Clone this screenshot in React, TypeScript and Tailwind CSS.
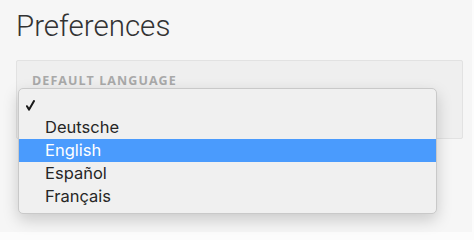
import React from "react";

const items = ["Deutsche", "English", "Español", "Français"];

export default function App() {
  return (
    <div className="w-[474px] h-[240px] bg-[#fcfcfc] overflow-hidden">
      <div className="w-[472px] h-[232px] bg-[#f6f6f6] px-4 pt-[9px]">
        <h1
          className="text-[29.5px] leading-[34px] font-light text-[#333333]"
          style={{ fontFamily: "Roboto, 'Liberation Sans', sans-serif" }}
        >
          Preferences
        </h1>
        <div className="relative mt-[17px] w-[447px] h-[79px] bg-[#efefef] border border-[#e2e2e2] rounded-[2px]">
          <div
            className="pl-[15px] pt-[13px] text-[12.5px] leading-[14px] font-bold tracking-[0.085em] text-[#a9a9a9] uppercase"
            style={{ fontFamily: "'Open Sans', 'Liberation Sans', sans-serif" }}
          >
            Default Language
          </div>
          <div
            className="absolute left-[1px] top-[27px] w-[419px] h-[126px] bg-[#f0f0f0] border border-[#c9c9c9] rounded-[5px] shadow-[0_6px_16px_rgba(0,0,0,0.18)] pt-[4px]"
            style={{ fontFamily: "Inter, 'Liberation Sans', sans-serif" }}
          >
            <div className="h-[23px] flex items-center pl-[7px]">
              <svg width="9" height="11" viewBox="0 0 9 11" className="mt-[2px]">
                <path d="M1 6.2 L3.1 9.6 L8 1" fill="none" stroke="#1a1a1a" strokeWidth="2" strokeLinecap="round" strokeLinejoin="round" />
              </svg>
            </div>
            {items.map((it) => (
              <div
                key={it}
                className={
                  it === "English"
                    ? "h-[23px] flex items-center pl-[26px] text-[16.5px] bg-[#4a9bfd] text-white"
                    : "h-[23px] flex items-center pl-[26px] text-[16.5px] text-[#262626]"
                }
              >
                {it}
              </div>
            ))}
          </div>
        </div>
      </div>
    </div>
  );
}
